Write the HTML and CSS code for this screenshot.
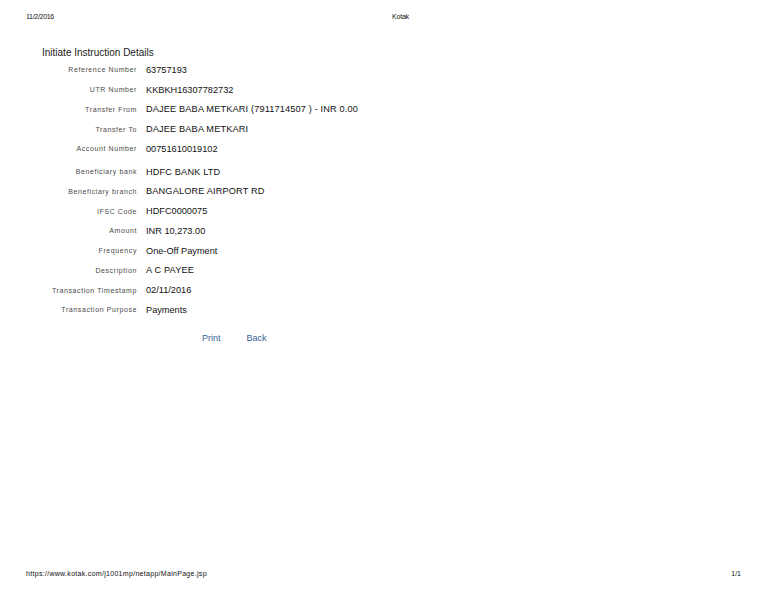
FILE: index.html
```html
<!DOCTYPE html>
<html>
<head>
<meta charset="utf-8">
<title>Kotak</title>
<link rel="stylesheet" href="styles.css">
</head>
<body>
<div class="page">
  <header class="top">
    <span class="date">11/2/2016</span>
    <span class="site">Kotak</span>
  </header>
  <main class="content">
    <h1 class="title">Initiate Instruction Details</h1>
    <div class="details">
      <div class="row"><span class="lbl">Reference Number</span><span class="val">63757193</span></div>
      <div class="row"><span class="lbl">UTR Number</span><span class="val">KKBKH16307782732</span></div>
      <div class="row"><span class="lbl">Transfer From</span><span class="val caps">DAJEE BABA METKARI (7911714507 ) - INR 0.00</span></div>
      <div class="row"><span class="lbl">Transfer To</span><span class="val caps">DAJEE BABA METKARI</span></div>
      <div class="row gapafter"><span class="lbl">Account Number</span><span class="val">00751610019102</span></div>
      <div class="row"><span class="lbl">Beneficiary bank</span><span class="val caps">HDFC BANK LTD</span></div>
      <div class="row"><span class="lbl">Beneficiary branch</span><span class="val caps">BANGALORE AIRPORT RD</span></div>
      <div class="row"><span class="lbl">IFSC Code</span><span class="val">HDFC0000075</span></div>
      <div class="row"><span class="lbl">Amount</span><span class="val">INR 10,273.00</span></div>
      <div class="row"><span class="lbl">Frequency</span><span class="val">One-Off Payment</span></div>
      <div class="row"><span class="lbl">Description</span><span class="val caps">A C PAYEE</span></div>
      <div class="row"><span class="lbl">Transaction Timestamp</span><span class="val">02/11/2016</span></div>
      <div class="row"><span class="lbl">Transaction Purpose</span><span class="val">Payments</span></div>
    </div>
    <div class="actions">
      <a class="link" href="#">Print</a>
      <a class="link" href="#">Back</a>
    </div>
  </main>
  <footer class="bottom">
    <span class="url">https://www.kotak.com/j1001mp/netapp/MainPage.jsp</span>
    <span class="pages">1/1</span>
  </footer>
</div>
</body>
</html>
```

FILE: styles.css
```css
html, body {
  margin: 0;
  padding: 0;
  background: #fff;
}
body {
  font-family: "Liberation Sans", Arial, sans-serif;
  color: #111;
}
.page {
  width: 768px;
  height: 594px;
  display: flex;
  flex-direction: column;
}
.top {
  display: flex;
  padding: 13px 0 0 26px;
  font-size: 7px;
  line-height: 8px;
  color: #111;
}
.date {
  width: 366px;
  letter-spacing: -0.3px;
}
.site {
  letter-spacing: -0.2px;
}
.content {
  padding: 0 0 0 42px;
}
.title {
  margin: 26px 0 0 0;
  font-size: 10px;
  line-height: 12px;
  font-weight: normal;
  color: #222;
}
.details {
  display: flex;
  flex-direction: column;
  margin-top: 1px;
}
.row {
  display: flex;
  align-items: center;
  height: 19.75px;
}
.row.gapafter {
  margin-bottom: 3px;
}
.lbl {
  width: 95px;
  text-align: right;
  font-size: 7px;
  letter-spacing: 0.6px;
  color: #4a4a4a;
  white-space: nowrap;
}
.val {
  margin-left: 9px;
  font-size: 9.2px;
  color: #111;
  white-space: nowrap;
}
.val.caps {
  letter-spacing: 0.15px;
}
.actions {
  display: flex;
  gap: 26px;
  margin: 13px 0 0 160px;
}
.link {
  font-size: 9px;
  color: #3a5e98;
  text-decoration: none;
}
.bottom {
  margin-top: auto;
  display: flex;
  justify-content: space-between;
  padding: 0 27px 16px 26px;
  font-size: 7px;
  line-height: 8px;
  color: #111;
}
.url {
  letter-spacing: 0.3px;
}
```
